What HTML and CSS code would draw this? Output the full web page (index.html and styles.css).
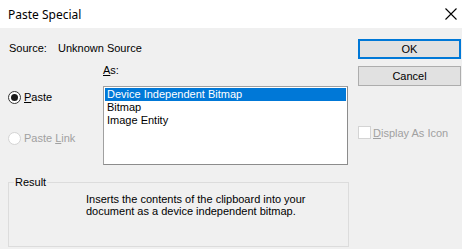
FILE: index.html
```html
<!DOCTYPE html>
<html lang="en">
<head>
  <meta charset="UTF-8">
  <title>Paste Special</title>
  <link rel="stylesheet" href="styles.css">
</head>
<body>
  <div class="titlebar">
    <span class="title">Paste Special</span>
    <svg class="close" width="12" height="12" viewBox="0 0 12 12">
      <path d="M0.5 0.5 L11.5 11.5 M11.5 0.5 L0.5 11.5" stroke="#000" stroke-width="1.1" fill="none"/>
    </svg>
  </div>
  <div class="dialog">
    <div class="main">
      <div class="source">
        <span class="source-label">Source:</span>
        <span>Unknown Source</span>
      </div>
      <div class="middle">
        <div class="options">
          <label class="radio">
            <span class="radio-dot checked"></span>
            <span><u>P</u>aste</span>
          </label>
          <label class="radio disabled">
            <span class="radio-dot"></span>
            <span>Paste <u>L</u>ink</span>
          </label>
        </div>
        <div class="as">
          <div class="as-label"><u>A</u>s:</div>
          <ul class="listbox">
            <li class="selected">Device Independent Bitmap</li>
            <li>Bitmap</li>
            <li>Image Entity</li>
          </ul>
        </div>
      </div>
      <fieldset class="result">
        <legend>Result</legend>
        <p>Inserts the contents of the clipboard into your<br>document as a device independent bitmap.</p>
      </fieldset>
    </div>
    <div class="side">
      <button class="btn default">OK</button>
      <button class="btn">Cancel</button>
      <label class="check disabled">
        <span class="box"></span>
        <span><u>D</u>isplay As Icon</span>
      </label>
    </div>
  </div>
</body>
</html>
```

FILE: styles.css
```css
* {
  box-sizing: border-box;
}

body {
  margin: 0;
  width: 462px;
  height: 249px;
  background-color: #f0f0f0;
  font-family: "Liberation Sans", Arial, sans-serif;
  font-size: 11px;
  color: #000;
  overflow: hidden;
}

.titlebar {
  height: 28px;
  background-color: #fff;
  display: flex;
  align-items: center;
  justify-content: space-between;
  padding: 0 5px 0 8px;
}

.title {
  font-family: "Noto Sans", "Open Sans", sans-serif;
  font-size: 12px;
  color: #000;
}

.dialog {
  display: flex;
  padding-left: 8px;
}

.main {
  width: 341px;
}

.source {
  margin-top: 14px;
  padding-left: 1px;
  height: 13px;
  line-height: 13px;
  display: flex;
}

.source-label {
  width: 49px;
}

.middle {
  display: flex;
  margin-top: 9px;
}

.options {
  width: 95px;
  padding-top: 26px;
}

.radio {
  display: flex;
  align-items: center;
  gap: 3px;
  height: 14px;
  margin-bottom: 27px;
}

.radio-dot {
  width: 13px;
  height: 13px;
  border-radius: 50%;
  border: 1px solid #333;
  background-color: #fff;
  display: flex;
  align-items: center;
  justify-content: center;
}

.radio-dot.checked::after {
  content: "";
  width: 7px;
  height: 7px;
  border-radius: 50%;
  background-color: #1a1a1a;
}

.disabled {
  color: #a0a0a0;
}

.radio.disabled .radio-dot {
  border-color: #d4d4d4;
}

.as {
  flex: 1;
}

.as-label {
  height: 13px;
  line-height: 13px;
  margin-bottom: 9px;
}

.listbox {
  list-style: none;
  margin: 0;
  padding: 1px;
  height: 79px;
  width: 245px;
  background-color: #fff;
  border: 1px solid #a0a0a0;
  border-right-color: #8c8c8c;
  border-bottom-color: #8c8c8c;
}

.listbox li {
  height: 13px;
  line-height: 13px;
  padding-left: 2px;
}

.listbox li.selected {
  background-color: #0078d7;
  color: #fff;
}

.result {
  margin: 4px 0 0 0;
  padding: 0;
  height: 71px;
  width: 341px;
  border: 1px solid #dcdcdc;
}

.result legend {
  padding: 0 1px;
  margin-left: 5px;
  line-height: 12px;
}

.result p {
  margin: 5px 0 0 77px;
  line-height: 12px;
}

.side {
  width: 103px;
  margin-left: 9px;
  padding-top: 11px;
  display: flex;
  flex-direction: column;
}

.btn {
  width: 103px;
  height: 20px;
  font-family: inherit;
  font-size: 11px;
  background-color: #e1e1e1;
  border: 1px solid #adadad;
  padding: 0;
  margin-bottom: 7px;
  color: #000;
}

.btn.default {
  border: 2px solid #0078d7;
}

.check {
  display: flex;
  align-items: center;
  gap: 2px;
  margin-top: 33px;
  height: 13px;
}

.box {
  width: 13px;
  height: 13px;
  border: 1px solid #d4d4d4;
  background-color: #fff;
}
```
